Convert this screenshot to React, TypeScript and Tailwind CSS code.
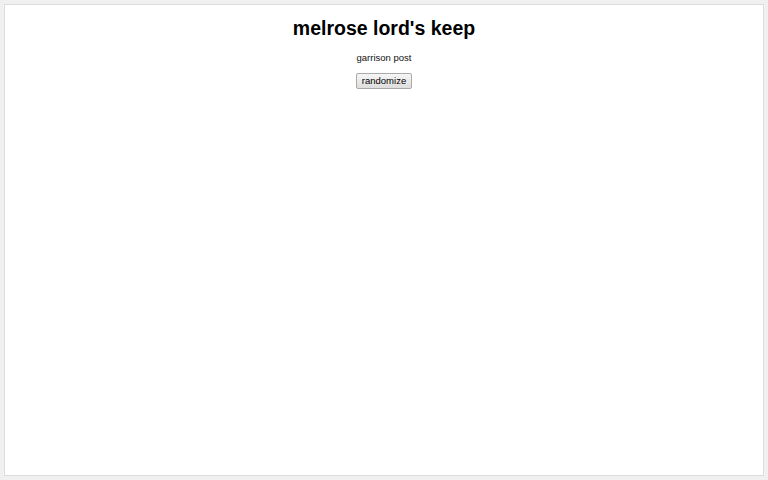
export default function App() {
  return (
    <div className="h-[480px] w-[768px] bg-[#f0f0f0] p-1 font-['Liberation_Sans',Arial,sans-serif]">
      <div className="flex h-full flex-col items-center border border-[#dcdcdc] bg-white">
        <h1 className="mt-[11px] text-[19.5px] leading-[24px] font-bold text-black">melrose lord's keep</h1>
        <p className="mt-[12px] text-[9.5px] leading-[12px] text-[#111]">garrison post</p>
        <button className="mt-[9px] rounded-[2px] border border-[#a9a9a9] bg-gradient-to-b from-[#f6f6f6] to-[#dedede] px-[5px] py-px text-[9.5px] leading-[12px] text-black">
          randomize
        </button>
      </div>
    </div>
  );
}
